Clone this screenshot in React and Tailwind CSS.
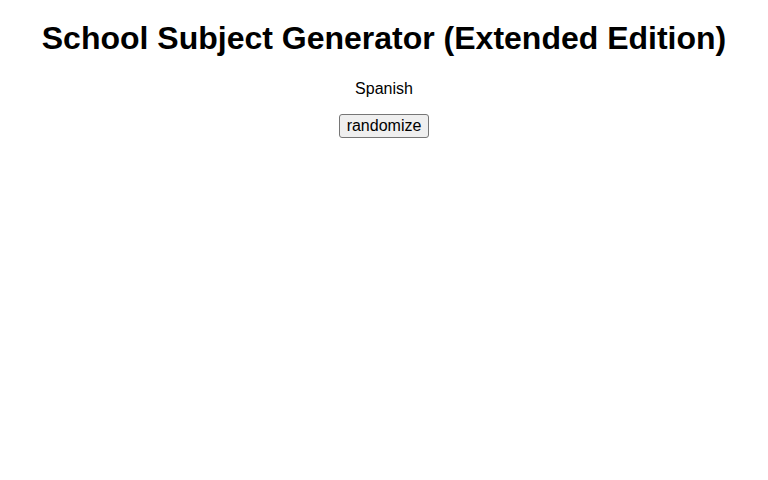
export default function App() {
  return (
    <div className="min-h-[480px] bg-white text-black text-center font-['Liberation_Sans',Arial,sans-serif] pt-[20px]">
      <h1 className="text-[32px] leading-[37px] font-bold">School Subject Generator (Extended Edition)</h1>
      <p className="mt-[23px] text-[16px] leading-[18px]">Spanish</p>
      <div className="mt-[16px]">
        <button className="text-[16px] leading-[18px] bg-[#efefef] border border-[#767676] rounded-[3px] px-[7px] py-[2px] text-black">
          randomize
        </button>
      </div>
    </div>
  );
}
